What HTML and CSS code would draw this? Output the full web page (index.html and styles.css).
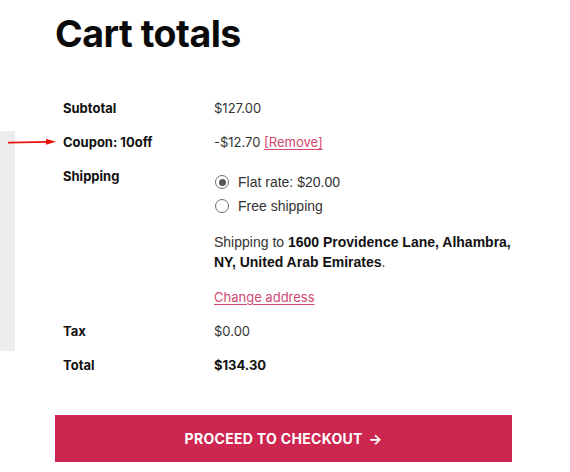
FILE: index.html
```html
<!DOCTYPE html>
<html>
<head>
<meta charset="utf-8">
<link rel="stylesheet" href="styles.css">
</head>
<body>
<div class="page">
  <div class="side-panel"></div>
  <svg class="pointer" width="50" height="8" viewBox="0 0 50 8">
    <line x1="0" y1="4.6" x2="40" y2="3.8" stroke="#e8140c" stroke-width="1.8"/>
    <polygon points="38,0.8 48,3.8 38,6.8" fill="#e8140c"/>
  </svg>
  <h1 class="title">Cart totals</h1>
  <div class="totals">
    <div class="label">Subtotal</div>
    <div class="value">$127.00</div>

    <div class="label">Coupon: 10off</div>
    <div class="value">-$12.70 <a class="link" href="#">[Remove]</a></div>

    <div class="label">Shipping</div>
    <div class="value">
      <ul class="methods">
        <li><span class="radio checked"></span>Flat rate: $20.00</li>
        <li><span class="radio"></span>Free shipping</li>
      </ul>
      <p class="dest">Shipping to <strong>1600 Providence Lane, Alhambra, NY, United Arab Emirates</strong>.</p>
      <a class="link change" href="#">Change address</a>
    </div>

    <div class="label">Tax</div>
    <div class="value">$0.00</div>

    <div class="label">Total</div>
    <div class="value strong">$134.30</div>
  </div>
  <a class="checkout" href="#">PROCEED TO CHECKOUT <span class="arr">&#8594;</span></a>
</div>
</body>
</html>
```
FILE: styles.css
```css
html, body {
  margin: 0;
  padding: 0;
  background: #fff;
}
body {
  font-family: Inter, "Liberation Sans", sans-serif;
  color: #111;
}
.page {
  position: relative;
  padding: 12px 0 0 55px;
  width: 457px;
}
.side-panel {
  position: absolute;
  left: 0;
  top: 131px;
  width: 15px;
  height: 220px;
  background: #ededed;
}
.pointer {
  position: absolute;
  left: 8px;
  top: 138px;
}
.title {
  margin: 0;
  font-size: 37.5px;
  line-height: 43px;
  font-weight: 700;
  letter-spacing: -0.5px;
  color: #0a0a0a;
}
.totals {
  margin-top: 36px;
  display: grid;
  grid-template-columns: 151px 1fr;
}
.label, .value {
  padding: 8px;
  line-height: 18px;
  font-size: 13px;
}
.label {
  font-weight: 700;
  color: #111;
}
.value {
  color: #333;
}
.value.strong {
  font-weight: 700;
  color: #111;
}
.link {
  color: #d2486f;
  text-decoration: underline;
  text-underline-offset: 2px;
}
.methods {
  list-style: none;
  margin: 3px 0 0;
  padding: 0;
  font-family: "Liberation Sans", Arial, sans-serif;
  font-size: 14px;
  color: #333;
}
.methods li {
  height: 24px;
  display: flex;
  align-items: center;
}
.radio {
  box-sizing: border-box;
  width: 14px;
  height: 14px;
  border: 1.5px solid #6e6e6e;
  border-radius: 50%;
  margin: 0 9px 0 1px;
  display: flex;
  align-items: center;
  justify-content: center;
}
.radio.checked::after {
  content: "";
  width: 7px;
  height: 7px;
  border-radius: 50%;
  background: #555;
}
.dest {
  margin: 14px 0 0;
  font-family: "Liberation Sans", Arial, sans-serif;
  font-size: 14px;
  line-height: 20px;
  color: #333;
  width: 306px;
}
.dest strong {
  color: #111;
}
.change {
  display: block;
  margin-top: 16px;
  font-size: 13px;
  line-height: 18px;
  width: max-content;
}
.checkout {
  display: flex;
  align-items: center;
  justify-content: center;
  margin-top: 33px;
  height: 47px;
  background: #cc2651;
  color: #fff;
  font-weight: 700;
  font-size: 14px;
  letter-spacing: 0.3px;
  text-decoration: none;
}
.arr {
  margin-left: 6px;
}
```
